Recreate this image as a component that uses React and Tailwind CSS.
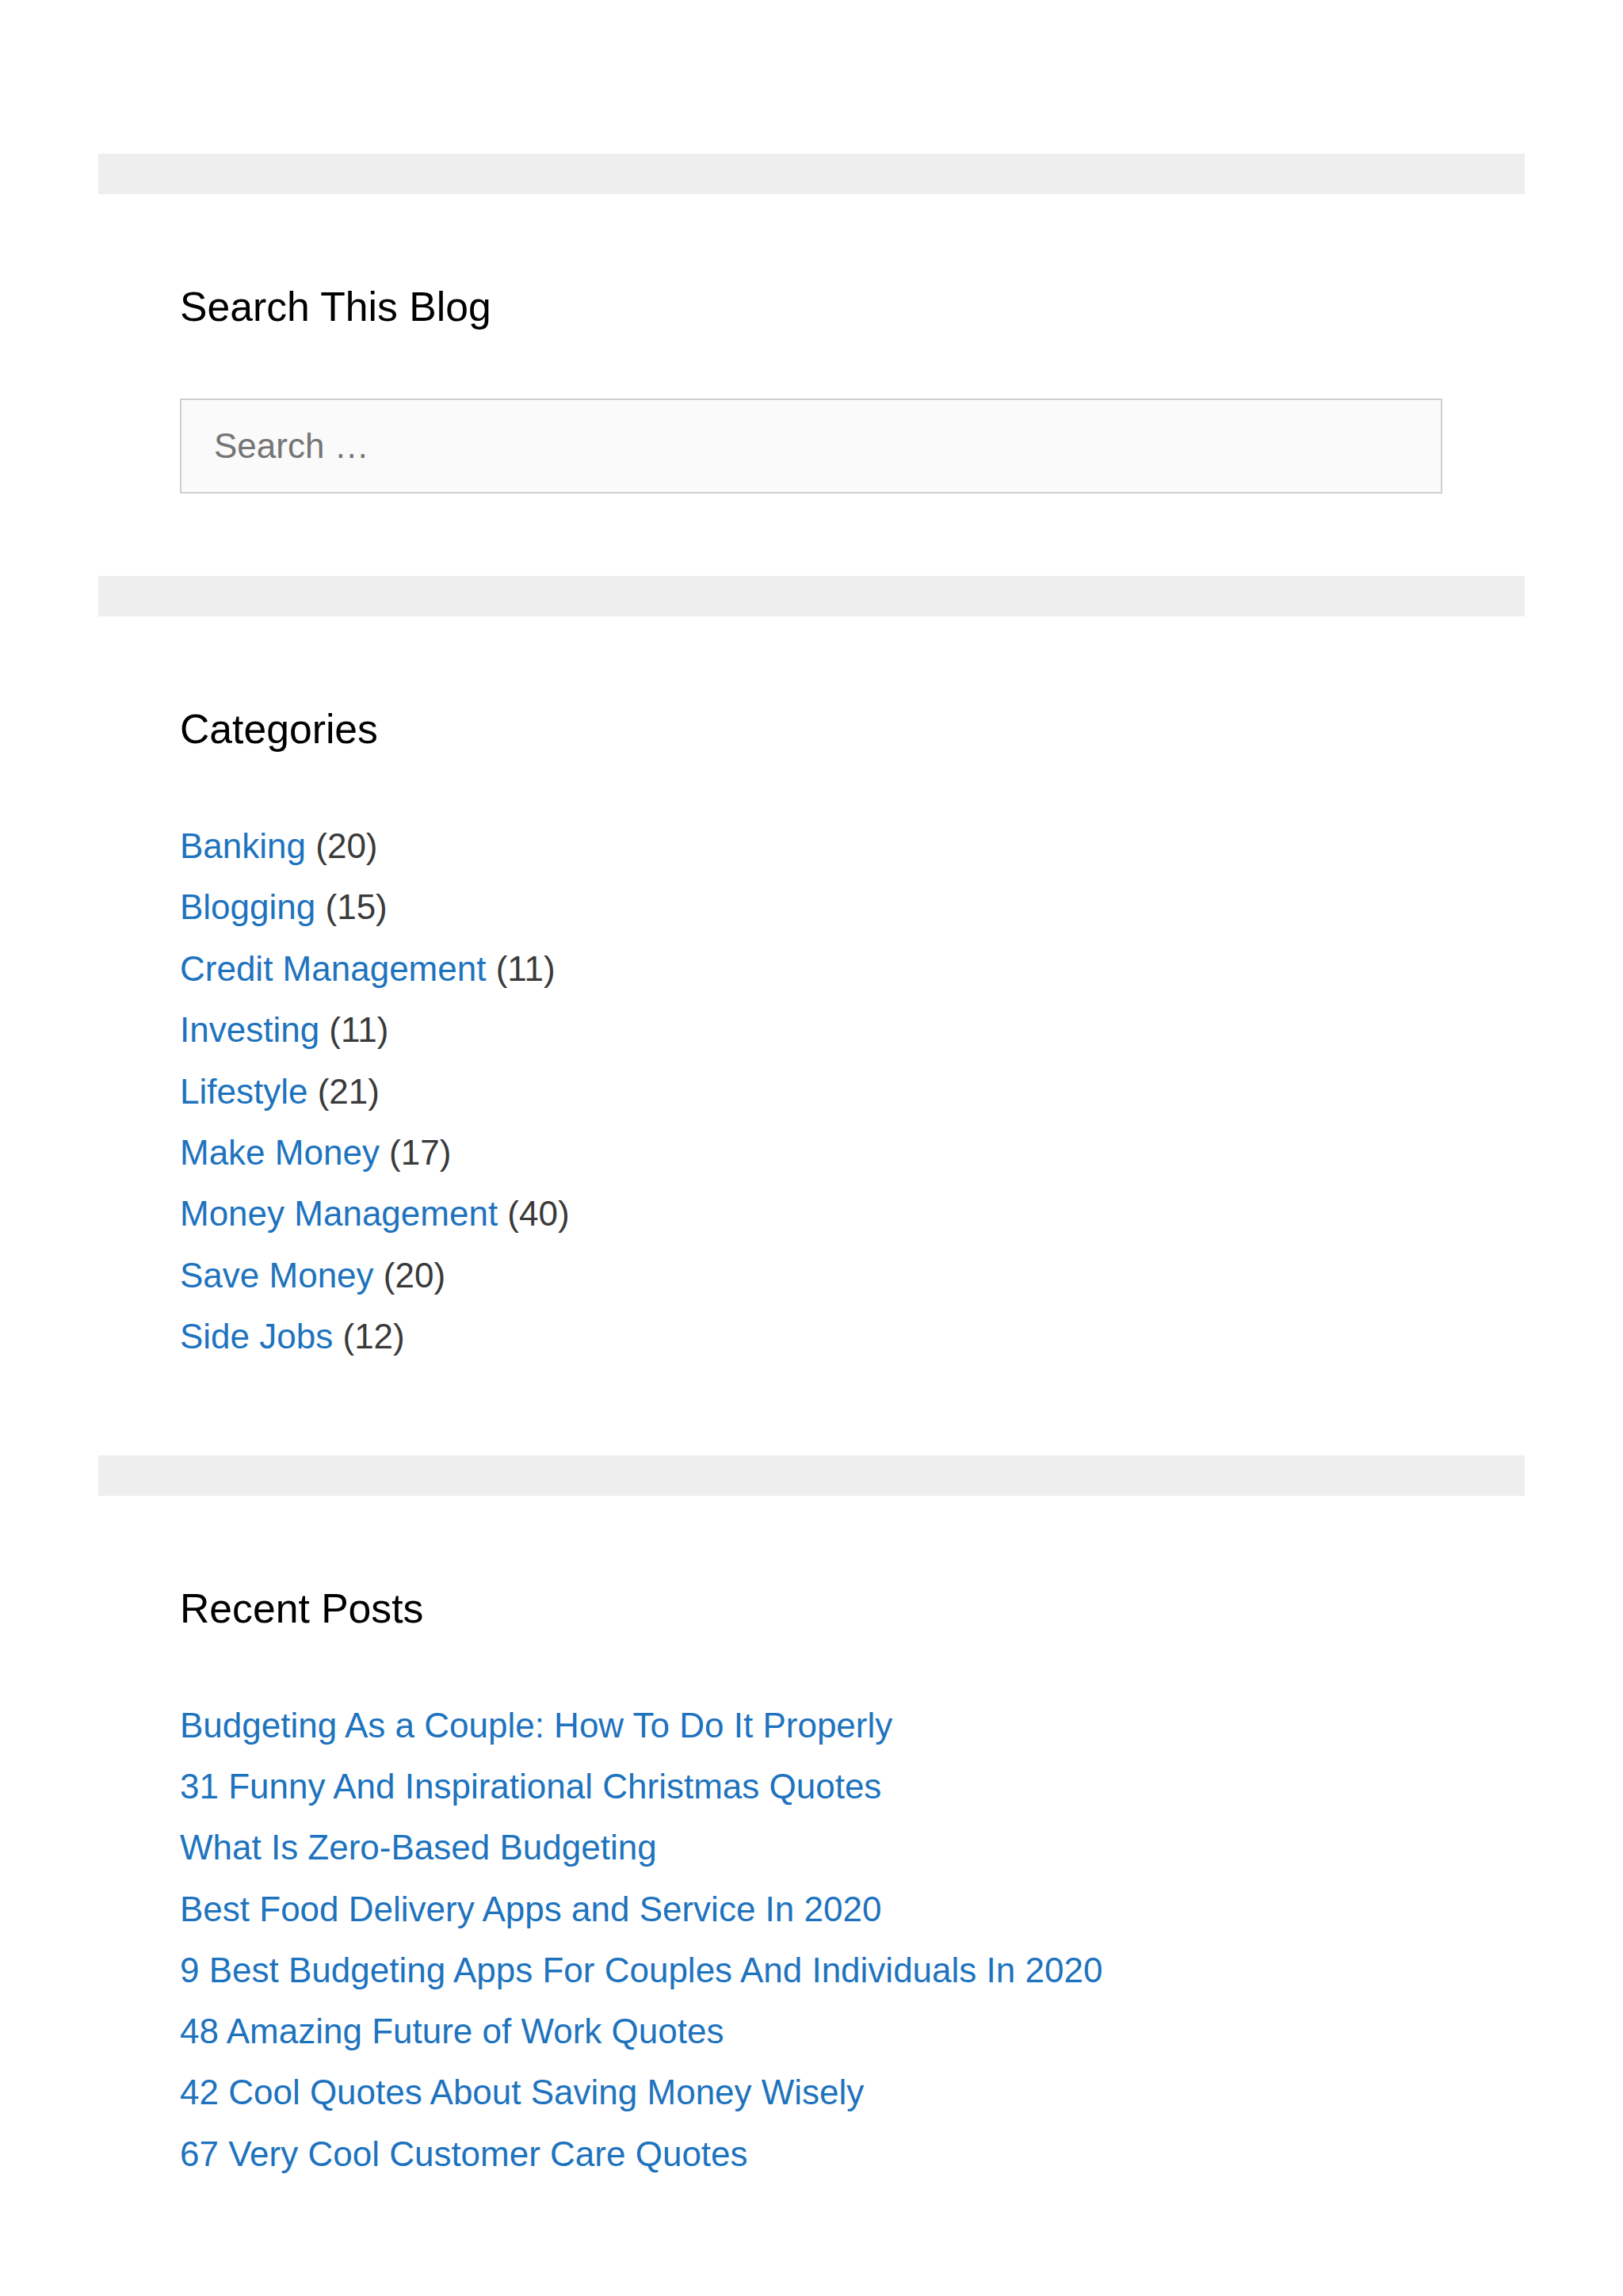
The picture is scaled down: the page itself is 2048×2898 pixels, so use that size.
import React from 'react';

const categories = [
  { name: 'Banking', count: 20 },
  { name: 'Blogging', count: 15 },
  { name: 'Credit Management', count: 11 },
  { name: 'Investing', count: 11 },
  { name: 'Lifestyle', count: 21 },
  { name: 'Make Money', count: 17 },
  { name: 'Money Management', count: 40 },
  { name: 'Save Money', count: 20 },
  { name: 'Side Jobs', count: 12 },
];

const posts = [
  'Budgeting As a Couple: How To Do It Properly',
  '31 Funny And Inspirational Christmas Quotes',
  'What Is Zero-Based Budgeting',
  'Best Food Delivery Apps and Service In 2020',
  '9 Best Budgeting Apps For Couples And Individuals In 2020',
  '48 Amazing Future of Work Quotes',
  '42 Cool Quotes About Saving Money Wisely',
  '67 Very Cool Customer Care Quotes',
];

// gray strip that sits on top of every sidebar widget
const Divider = () => <div className="h-[51px] bg-[#eeeeee]" />;

const WidgetTitle = ({ children }) => (
  <h2 className="text-[51.7px] leading-[62px] font-normal text-black">{children}</h2>
);

export default function App() {
  return (
    <div className="min-h-[2898px] bg-white pt-[194px] font-['Liberation_Sans',Arial,sans-serif]">
      <aside className="ml-[124px] w-[1800px]">
        {/* Search */}
        <section>
          <Divider />
          <div className="pl-[103px] pr-[104px] pt-[111px] pb-[104px]">
            <WidgetTitle>Search This Blog</WidgetTitle>
            <form className="mt-[85px]" onSubmit={(e) => e.preventDefault()}>
              <input
                type="search"
                placeholder="Search …"
                className="block h-[120px] w-full border-2 border-[#cfcfcf] bg-[#fafafa] pl-[41px] text-[44px] text-[#3a3a3a] placeholder:text-[#757575] outline-none"
              />
            </form>
          </div>
        </section>

        {/* Categories */}
        <section>
          <Divider />
          <div className="pl-[103px] pr-[104px] pt-[111px] pb-[111px]">
            <WidgetTitle>Categories</WidgetTitle>
            <ul className="mt-[78px] text-[44px] leading-[77.4px] text-[#3a3a3a]">
              {categories.map((c) => (
                <li key={c.name}>
                  <a href="#" className="text-[#1e73be]">{c.name}</a> ({c.count})
                </li>
              ))}
            </ul>
          </div>
        </section>

        {/* Recent posts */}
        <section>
          <Divider />
          <div className="pl-[103px] pr-[104px] pt-[111px] pb-[140px]">
            <WidgetTitle>Recent Posts</WidgetTitle>
            <ul className="mt-[78px] text-[44px] leading-[77.3px]">
              {posts.map((p) => (
                <li key={p}>
                  <a href="#" className="text-[#1e73be]">{p}</a>
                </li>
              ))}
            </ul>
          </div>
        </section>
      </aside>
    </div>
  );
}
